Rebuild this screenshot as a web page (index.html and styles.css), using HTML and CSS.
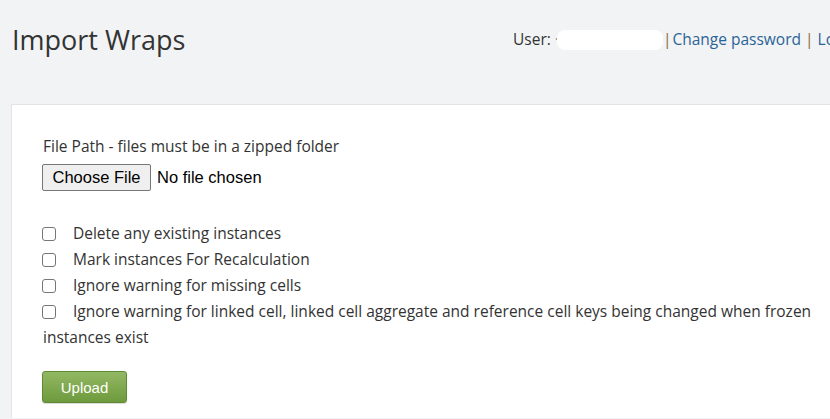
FILE: index.html
```html
<!DOCTYPE html>
<html>
<head>
<meta charset="utf-8">
<link rel="stylesheet" href="styles.css">
</head>
<body>
<div class="header">
  <h1 class="title">Import Wraps</h1>
  <div class="userbar">User: <span class="dot">·</span><span class="redact"></span><span class="sep first">|</span> <a href="#">Change password</a> <span class="sep">|</span> <a href="#">Logout</a></div>
</div>
<div class="card">
  <div class="field-label">File Path - files must be in a zipped folder</div>
  <div class="file-row"><span class="file-btn">Choose File</span><span class="file-name">No file chosen</span></div>
  <div class="checks">
    <label class="check"><span class="box"></span>Delete any existing instances</label>
    <label class="check"><span class="box"></span>Mark instances For Recalculation</label>
    <label class="check"><span class="box"></span>Ignore warning for missing cells</label>
    <label class="check wrap"><span class="box"></span>Ignore warning for linked cell, linked cell aggregate and reference cell keys being changed when frozen instances exist</label>
  </div>
  <button class="upload">Upload</button>
</div>
</body>
</html>
```
FILE: styles.css
```css
html, body { margin: 0; padding: 0; }
body {
  background: #f2f3f5;
  font-family: "Open Sans", "Noto Sans", sans-serif;
  color: #333;
  width: 830px;
  height: 419px;
  overflow: hidden;
}
.header {
  display: flex;
  align-items: flex-start;
  height: 104px;
  white-space: nowrap;
  overflow: hidden;
}
.title {
  flex-shrink: 0;
  margin: 0;
  padding: 21px 0 0 12px;
  font-size: 27px;
  font-weight: 400;
  line-height: 38px;
  width: 501px;
  color: #333;
}
.userbar {
  flex-shrink: 0;
  padding-top: 29px;
  font-size: 15.5px;
  line-height: 20px;
  color: #333;
}
.userbar a { color: #2a6496; text-decoration: none; }
.dot { color: #888; }
.redact {
  display: inline-block;
  width: 106px;
  height: 20px;
  background: #fff;
  border-radius: 8px;
  vertical-align: -5px;
  margin-left: -2px;
}
.sep { color: #8a6a3a; }
.sep.first { margin-right: -3px; }
.card {
  background: #fff;
  margin-left: 11px;
  border-top: 1px solid #e3e3e3;
  border-left: 1px solid #e3e3e3;
  padding: 31px 0 0 31px;
  height: 282px;
}
.field-label {
  font-size: 15.5px;
  line-height: 21px;
}
.file-row {
  display: flex;
  align-items: center;
  margin-top: 7px;
  margin-left: -1px;
  font-family: "Liberation Sans", Arial, sans-serif;
  font-size: 16.5px;
}
.file-btn {
  box-sizing: border-box;
  height: 27px;
  width: 109px;
  text-align: center;
  line-height: 25px;
  border: 1px solid #767676;
  border-radius: 2px;
  background: #efefef;
  color: #000;
}
.file-name { margin-left: 6px; color: #000; }
.checks {
  margin-top: 29px;
  font-size: 15.5px;
  line-height: 26px;
  width: 780px;
}
.check { display: block; }
.box {
  display: inline-block;
  box-sizing: border-box;
  width: 14px;
  height: 14px;
  border: 1px solid #767676;
  border-radius: 3px;
  vertical-align: -2px;
  margin-left: -1px;
  margin-right: 17px;
}
.upload {
  margin-top: 21px;
  margin-left: -1px;
  width: 85px;
  height: 32px;
  border: 1px solid #5e8a34;
  border-radius: 3px;
  background: linear-gradient(#93b863, #6e9a3d);
  color: #fff;
  font-family: "Liberation Sans", Arial, sans-serif;
  font-size: 15px;
  padding: 0;
  box-shadow: 0 1px 1px rgba(0,0,0,0.15);
}
```
